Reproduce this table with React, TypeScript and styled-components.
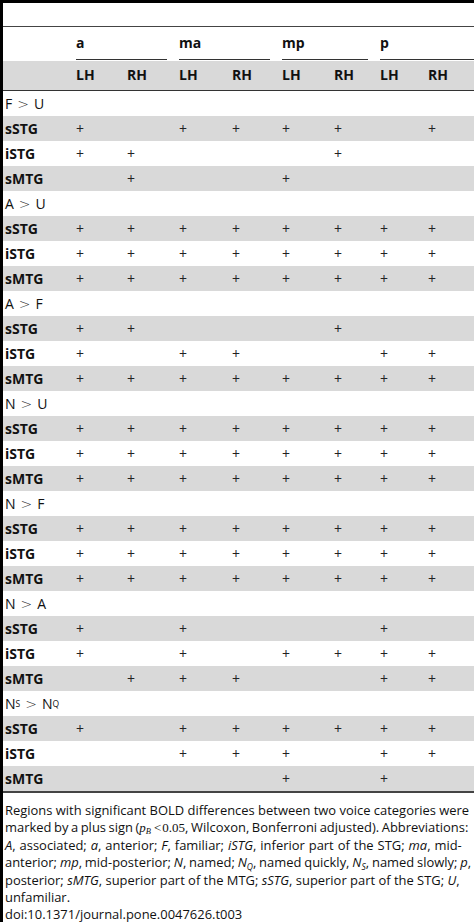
import React from "react";
import styled, { createGlobalStyle } from "styled-components";

const Global = createGlobalStyle`
  html, body { margin: 0; padding: 0; background: #fff; }
  body { font-family: "Open Sans", "DejaVu Sans", sans-serif; color: #111; }
`;

const Frame = styled.div`
  border-left: 3px solid #000;
  border-top: 3px solid #000;
  height: 922px;
  box-sizing: border-box;
  overflow: hidden;
`;

const TopRule = styled.div`
  height: 23px;
  border-bottom: 1px solid #444;
`;

const Grid = styled.div`
  display: grid;
  grid-template-columns: 73px 51px 52px 53px 50px 52px 46px 48px 1fr;
  border-bottom: 2px solid #444;
`;

const GroupHead = styled.div<{ $last?: boolean }>`
  grid-column: span 2;
  height: 33px;
  padding-bottom: 2px;
  box-sizing: border-box;
  margin-right: ${(p) => (p.$last ? "0" : "12px")};
  border-bottom: 1px solid #333;
  display: flex;
  align-items: center;
  font-weight: 700;
  font-size: 14px;
`;

const Blank = styled.div<{ $h: number }>`
  height: ${(p) => p.$h}px;
`;

const Cell = styled.div<{ $gray?: boolean; $bold?: boolean; $h?: number; $line?: boolean }>`
  height: ${(p) => p.$h ?? 25}px;
  box-sizing: border-box;
  background: ${(p) => (p.$gray ? "#d9d9d9" : "#fff")};
  display: flex;
  align-items: center;
  font-size: 14px;
  font-weight: ${(p) => (p.$bold ? 700 : 400)};
  white-space: nowrap;
  border-bottom: ${(p) => (p.$line ? "1px solid #333" : "none")};
  padding-bottom: ${(p) => (p.$line ? "3px" : "0")};
`;

const LabelCell = styled(Cell)`
  padding-left: 2px;
`;

const SectionCell = styled.div`
  grid-column: 1 / -1;
  height: 25px;
  display: flex;
  align-items: center;
  padding-left: 2px;
  font-size: 14px;
`;

const Gt = styled.span`
  font-family: "DejaVu Sans", sans-serif;
  font-weight: 200;
  margin: 0 5px;
  color: #333;
`;

const Sub = styled.sub`
  font-size: 8.5px;
  vertical-align: -3px;
  line-height: 0;
`;

const Plus = styled.span`
  font-size: 14px;
  color: #222;
`;

const Note = styled.div`
  padding: 9px 0 0 2px;
  font-size: 12.95px;
  line-height: 17.4px;
  white-space: nowrap;
  color: #111;
`;

const Line = styled.div<{ $ws?: number }>`
  word-spacing: ${(p) => p.$ws ?? 0}px;
`;

const Mathit = styled.span<{ $upright?: boolean }>`
  font-family: "Liberation Serif", "DejaVu Serif", serif;
  font-style: ${(p) => (p.$upright ? "normal" : "italic")};
  font-size: 13px;
`;

const Lt = styled.span`
  margin: 0 1px 0 3px;
`;

const MathSub = styled.sub`
  font-family: "Liberation Serif", serif;
  font-style: italic;
  font-size: 8.5px;
  vertical-align: -2px;
  line-height: 0;
`;

type Row = { name: string; v: string };
type Section = { title: React.ReactNode; rows: Row[] };

const sections: Section[] = [
  { title: <>F<Gt>&gt;</Gt>U</>, rows: [
    { name: "sSTG", v: "10111101" },
    { name: "iSTG", v: "11000100" },
    { name: "sMTG", v: "01001000" },
  ]},
  { title: <>A<Gt>&gt;</Gt>U</>, rows: [
    { name: "sSTG", v: "11111111" },
    { name: "iSTG", v: "11111111" },
    { name: "sMTG", v: "11111111" },
  ]},
  { title: <>A<Gt>&gt;</Gt>F</>, rows: [
    { name: "sSTG", v: "11000100" },
    { name: "iSTG", v: "10110011" },
    { name: "sMTG", v: "11111111" },
  ]},
  { title: <>N<Gt>&gt;</Gt>U</>, rows: [
    { name: "sSTG", v: "11111111" },
    { name: "iSTG", v: "11111111" },
    { name: "sMTG", v: "11111111" },
  ]},
  { title: <>N<Gt>&gt;</Gt>F</>, rows: [
    { name: "sSTG", v: "11111111" },
    { name: "iSTG", v: "11111111" },
    { name: "sMTG", v: "11111111" },
  ]},
  { title: <>N<Gt>&gt;</Gt>A</>, rows: [
    { name: "sSTG", v: "10100010" },
    { name: "iSTG", v: "10101111" },
    { name: "sMTG", v: "01110011" },
  ]},
  { title: <>N<Sub>S</Sub><Gt>&gt;</Gt>N<Sub>Q</Sub></>, rows: [
    { name: "sSTG", v: "10111111" },
    { name: "iSTG", v: "00111011" },
    { name: "sMTG", v: "00001010" },
  ]},
];

const groups = ["a", "ma", "mp", "p"];

export default function App() {
  return (
    <>
      <Global />
      <Frame>
        <TopRule />
        <Grid>
          <Blank $h={34} />
          {groups.map((g, i) => (
            <GroupHead key={g} $last={i === 3}>{g}</GroupHead>
          ))}
          <Cell $gray $h={30} $line />
          {Array.from({ length: 8 }).map((_, i) => (
            <Cell key={i} $gray $bold $h={30} $line>{i % 2 === 0 ? "LH" : "RH"}</Cell>
          ))}
          {sections.map((s, si) => (
            <React.Fragment key={si}>
              <SectionCell>{s.title}</SectionCell>
              {s.rows.map((r, ri) => {
                const gray = ri !== 1;
                return (
                  <React.Fragment key={ri}>
                    <LabelCell $gray={gray} $bold>{r.name}</LabelCell>
                    {r.v.split("").map((c, ci) => (
                      <Cell key={ci} $gray={gray}>{c === "1" ? <Plus>+</Plus> : null}</Cell>
                    ))}
                  </React.Fragment>
                );
              })}
            </React.Fragment>
          ))}
        </Grid>
        <Note>
          <Line>Regions with significant BOLD differences between two voice categories were</Line>
          <Line $ws={-0.8}>
            marked by a plus sign (<Mathit>p</Mathit><MathSub>B</MathSub>
            <Mathit $upright><Lt>&lt;</Lt>0.05</Mathit>, Wilcoxon, Bonferroni adjusted). Abbreviations:
          </Line>
          <Line $ws={0.6}>
            <i>A</i>, associated; <i>a</i>, anterior; <i>F</i>, familiar; <i>iSTG</i>, inferior part of the STG; <i>ma</i>, mid-
          </Line>
          <Line $ws={-0.5}>
            anterior; <i>mp</i>, mid-posterior; <i>N</i>, named; <i>N<Sub>Q</Sub></i>, named quickly, <i>N<Sub>S</Sub></i>, named slowly; <i>p</i>,
          </Line>
          <Line>
            posterior; <i>sMTG</i>, superior part of the MTG; <i>sSTG</i>, superior part of the STG; <i>U</i>,
          </Line>
          <Line>unfamiliar.</Line>
          <Line>doi:10.1371/journal.pone.0047626.t003</Line>
        </Note>
      </Frame>
    </>
  );
}
